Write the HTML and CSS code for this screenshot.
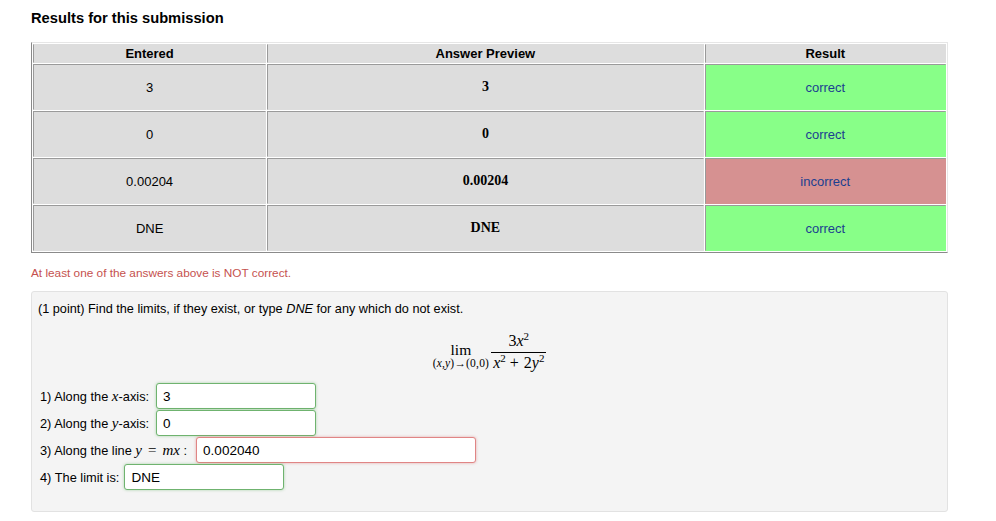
FILE: index.html
```html
<!DOCTYPE html>
<html>
<head>
<meta charset="utf-8">
<link rel="stylesheet" href="styles.css">
</head>
<body>
<div class="page">
  <h2 class="title">Results for this submission</h2>
  <table class="results">
    <colgroup>
      <col class="c1"><col class="c2"><col class="c3">
    </colgroup>
    <tr class="head">
      <th>Entered</th><th>Answer Preview</th><th>Result</th>
    </tr>
    <tr>
      <td>3</td><td class="preview">3</td><td class="ok">correct</td>
    </tr>
    <tr>
      <td>0</td><td class="preview">0</td><td class="ok">correct</td>
    </tr>
    <tr>
      <td>0.00204</td><td class="preview">0.00204</td><td class="bad">incorrect</td>
    </tr>
    <tr>
      <td>DNE</td><td class="preview">DNE</td><td class="ok">correct</td>
    </tr>
  </table>
  <p class="warn">At least one of the answers above is NOT correct.</p>
  <div class="problem">
    <p class="statement">(1 point) Find the limits, if they exist, or type <em>DNE</em> for any which do not exist.</p>
    <div class="display">
      <span class="lim">
        <span class="limword">lim</span>
        <span class="limsub">(<i>x</i>,<i>y</i>)→(0,0)</span>
      </span>
      <span class="frac">
        <span class="num">3<i>x</i><sup>2</sup></span>
        <span class="den"><i>x</i><sup>2</sup><span class="op">+</span>2<i>y</i><sup>2</sup></span>
      </span>
    </div>
    <div class="answers">
      <div class="arow">1) Along the&nbsp;<i class="m">x</i>-axis:<span class="inp good w1 g1">3</span></div>
      <div class="arow">2) Along the&nbsp;<i class="m">y</i>-axis:<span class="inp good w1 g1">0</span></div>
      <div class="arow">3) Along the line&nbsp;<span class="m"><i>y</i><span class="eq">=</span><i>mx</i></span>&nbsp;:<span class="inp wrong w3 g3">0.002040</span></div>
      <div class="arow">4) The limit is:<span class="inp good w1">DNE</span></div>
    </div>
  </div>
</div>
</body>
</html>
```
FILE: styles.css
```css
html, body {
  margin: 0;
  padding: 0;
  background: #ffffff;
}
body {
  font-family: "Liberation Sans", Arial, sans-serif;
  font-size: 13px;
  color: #000;
}
.page {
  padding: 9px 0 0 31px;
  width: 917px;
}
.title {
  margin: 0 0 15px 0;
  font-size: 14.7px;
  font-weight: bold;
  line-height: 18px;
}
.results {
  width: 917px;
  box-sizing: border-box;
  table-layout: fixed;
  border-collapse: separate;
  border-spacing: 1px;
  background: #ffffff;
  border-top: 1px solid #e6e6e6;
  border-left: 1px solid #8a8a8a;
  border-right: 1px solid #e6e6e6;
  border-bottom: 1px solid #8a8a8a;
  margin: 0;
}
.c1 { width: 25.6%; }
.c2 { width: 47.9%; }
.c3 { width: 26.5%; }
.results th, .results td {
  background: #dddddd;
  text-align: center;
  vertical-align: middle;
  padding: 0 5px;
  border-top: 1px solid #9a9a9a;
  border-left: 1px solid #9a9a9a;
  border-right: 1px solid #dddddd;
  border-bottom: 1px solid #dddddd;
}
.results th {
  height: 17px;
  font-weight: bold;
  font-size: 13px;
  border-top-color: #dddddd;
}
.results td {
  height: 44px;
}
.results td.preview {
  font-family: "Liberation Serif", "DejaVu Serif", serif;
  font-weight: bold;
  font-size: 14px;
}
.results td.ok {
  background: #88ff88;
  color: #1b3f90;
  border-right-color: #88ff88;
  border-bottom-color: #88ff88;
}
.results td.bad {
  background: #d69191;
  color: #1b3f90;
  border-right-color: #d69191;
  border-bottom-color: #d69191;
}
.warn {
  margin: 12px 0 0 0;
  font-size: 11.8px;
  color: #c5514e;
  line-height: 16px;
}
.problem {
  margin-top: 10px;
  background: #f4f4f4;
  border: 1px solid #e2e2e2;
  border-radius: 3px;
  height: 221px;
  padding: 8px 8px 0 6px;
  box-sizing: border-box;
}
.statement {
  margin: 0;
  font-size: 12.7px;
  line-height: 18px;
}
.display {
  display: flex;
  justify-content: center;
  align-items: center;
  margin-top: 14px;
  padding-left: 2px;
  font-family: "Liberation Serif", "DejaVu Serif", serif;
  font-size: 16px;
}
.lim {
  display: inline-flex;
  flex-direction: column;
  align-items: center;
  margin-right: 2px;
  margin-top: 7px;
}
.limword {
  line-height: 15px;
  font-size: 15.5px;
}
.limsub {
  font-size: 11.5px;
  line-height: 12px;
  letter-spacing: 0.2px;
}
.frac {
  display: inline-flex;
  flex-direction: column;
  align-items: stretch;
  text-align: center;
}
.num {
  padding: 0 2px 2px 2px;
  line-height: 18px;
  border-bottom: 1px solid #000;
}
.den {
  padding: 1px 2px 0 2px;
  line-height: 18px;
}
.op {
  margin: 0 5px 0 4px;
}
.frac sup {
  font-size: 11px;
  line-height: 0;
  vertical-align: 6px;
}
.display i {
  font-style: italic;
}
.answers {
  margin-top: 11px;
  display: flex;
  flex-direction: column;
  gap: 1px;
  padding-left: 2px;
}
.arow {
  display: flex;
  align-items: center;
  height: 26px;
  font-size: 12.8px;
  white-space: nowrap;
}
.m {
  font-family: "Liberation Serif", "DejaVu Serif", serif;
  font-size: 15px;
  font-style: italic;
}
.m i { font-style: italic; }
.eq {
  font-style: normal;
  margin: 0 6px;
}
.inp {
  display: inline-flex;
  align-items: center;
  box-sizing: border-box;
  height: 26px;
  margin-left: 5px;
  padding: 0 6px;
  background: #ffffff;
  border-radius: 3px;
  font-size: 13.5px;
}
.g1 { margin-left: 7px; }
.g3 { margin-left: 9px; }
.w1 { width: 160px; }
.w3 { width: 280px; }
.good {
  border: 1px solid #6fb36f;
  box-shadow: 0 0 3px rgba(80, 170, 80, 0.45);
}
.wrong {
  border: 1px solid #e08585;
  box-shadow: 0 0 3px rgba(210, 80, 80, 0.45);
}
```
